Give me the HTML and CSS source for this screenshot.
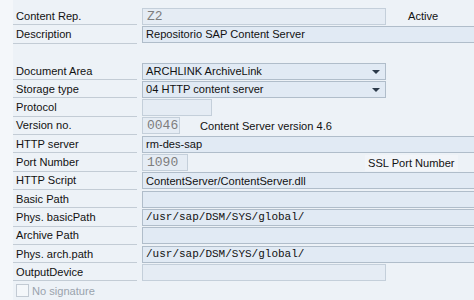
FILE: index.html
```html
<!DOCTYPE html>
<html lang="en">

<head>
    <meta charset="UTF-8">
    <title>Content Repository</title>
    <link rel="stylesheet" href="styles.css">
</head>

<body>
    <div class="panel">
        <div class="form">
            <div class="label">Content Rep.</div>
            <div class="value">
                <div class="field mono disabled w-long">Z2</div>
                <span class="status">Active</span>
            </div>

            <div class="label">Description</div>
            <div class="value"><div class="field full">Repositorio SAP Content Server</div></div>

            <div class="label empty"></div>
            <div class="value"></div>

            <div class="label">Document Area</div>
            <div class="value"><div class="field select w-long">ARCHLINK ArchiveLink<span class="arrow"></span></div></div>

            <div class="label">Storage type</div>
            <div class="value"><div class="field select w-long">04 HTTP content server<span class="arrow"></span></div></div>

            <div class="label">Protocol</div>
            <div class="value"><div class="field disabled w-proto"></div></div>

            <div class="label">Version no.</div>
            <div class="value">
                <div class="field mono disabled w-ver">0046</div>
                <span class="note">Content Server version 4.6</span>
            </div>

            <div class="label">HTTP server</div>
            <div class="value"><div class="field full">rm-des-sap</div></div>

            <div class="label">Port Number</div>
            <div class="value">
                <div class="field mono disabled w-port">1090</div>
                <span class="ssl">SSL Port Number</span>
            </div>

            <div class="label">HTTP Script</div>
            <div class="value"><div class="field full">ContentServer/ContentServer.dll</div></div>

            <div class="label">Basic Path</div>
            <div class="value"><div class="field full"></div></div>

            <div class="label">Phys. basicPath</div>
            <div class="value"><div class="field mono full">/usr/sap/DSM/SYS/global/</div></div>

            <div class="label">Archive Path</div>
            <div class="value"><div class="field full"></div></div>

            <div class="label">Phys. arch.path</div>
            <div class="value"><div class="field mono full">/usr/sap/DSM/SYS/global/</div></div>

            <div class="label">OutputDevice</div>
            <div class="value"><div class="field disabled w-long"></div></div>

            <div class="check-row">
                <span class="checkbox"></span>
                <span>No signature</span>
            </div>
        </div>
    </div>
</body>

</html>
```

FILE: styles.css
```css
body {
    margin: 0;
    background-color: #f4f7fa;
    font-family: Tahoma, "Liberation Sans", Arial, sans-serif;
    font-size: 11.1px;
    color: #111;
    height: 300px;
    overflow: hidden;
}

.panel {
    margin-left: 13px;
    padding-top: 7px;
    background-color: #edf2f7;
    height: 293px;
}

.form {
    display: grid;
    grid-template-columns: 124px 1fr;
    grid-auto-rows: 18.3px;
    column-gap: 5px;
}

.label {
    padding-left: 3px;
    border-bottom: 1px solid #c3ccd5;
    display: flex;
    align-items: center;
    white-space: nowrap;
}

.label.empty {
    border-bottom: none;
}

.value {
    display: flex;
    align-items: center;
    white-space: nowrap;
}

.field {
    box-sizing: border-box;
    height: 17px;
    border: 1px solid #b0bdca;
    background-color: #e1eaf4;
    padding: 0 3px;
    display: flex;
    align-items: center;
    position: relative;
}

.field.disabled {
    border-color: #c4cfda;
    background-color: #e5ecf4;
    color: #7d7d7d;
}

.field.mono {
    font-family: "Liberation Mono", "Courier New", monospace;
    font-size: 11px;
}

.field.mono.disabled {
    font-size: 13px;
    padding-left: 4px;
}

.field.full {
    flex: 1;
    border-right: none;
}

.w-long {
    width: 244px;
}

.w-proto {
    width: 70px;
}

.w-ver {
    width: 38px;
}

.w-port {
    width: 46px;
}

.arrow {
    position: absolute;
    right: 5px;
    top: 6px;
    border-left: 4px solid transparent;
    border-right: 4px solid transparent;
    border-top: 4px solid #2c3a4a;
}

.status {
    margin-left: 22px;
}

.note {
    margin-left: 20px;
}

.ssl {
    margin-left: 177px;
    background-color: #f2f5f9;
    padding: 2px 3px;
}

.check-row {
    grid-column: 1 / 3;
    display: flex;
    align-items: center;
    gap: 3px;
    padding-left: 3px;
    color: #9aa3ad;
}

.checkbox {
    width: 11px;
    height: 11px;
    border: 1px solid #c2cad3;
    background-color: #f4f7fa;
}
```
